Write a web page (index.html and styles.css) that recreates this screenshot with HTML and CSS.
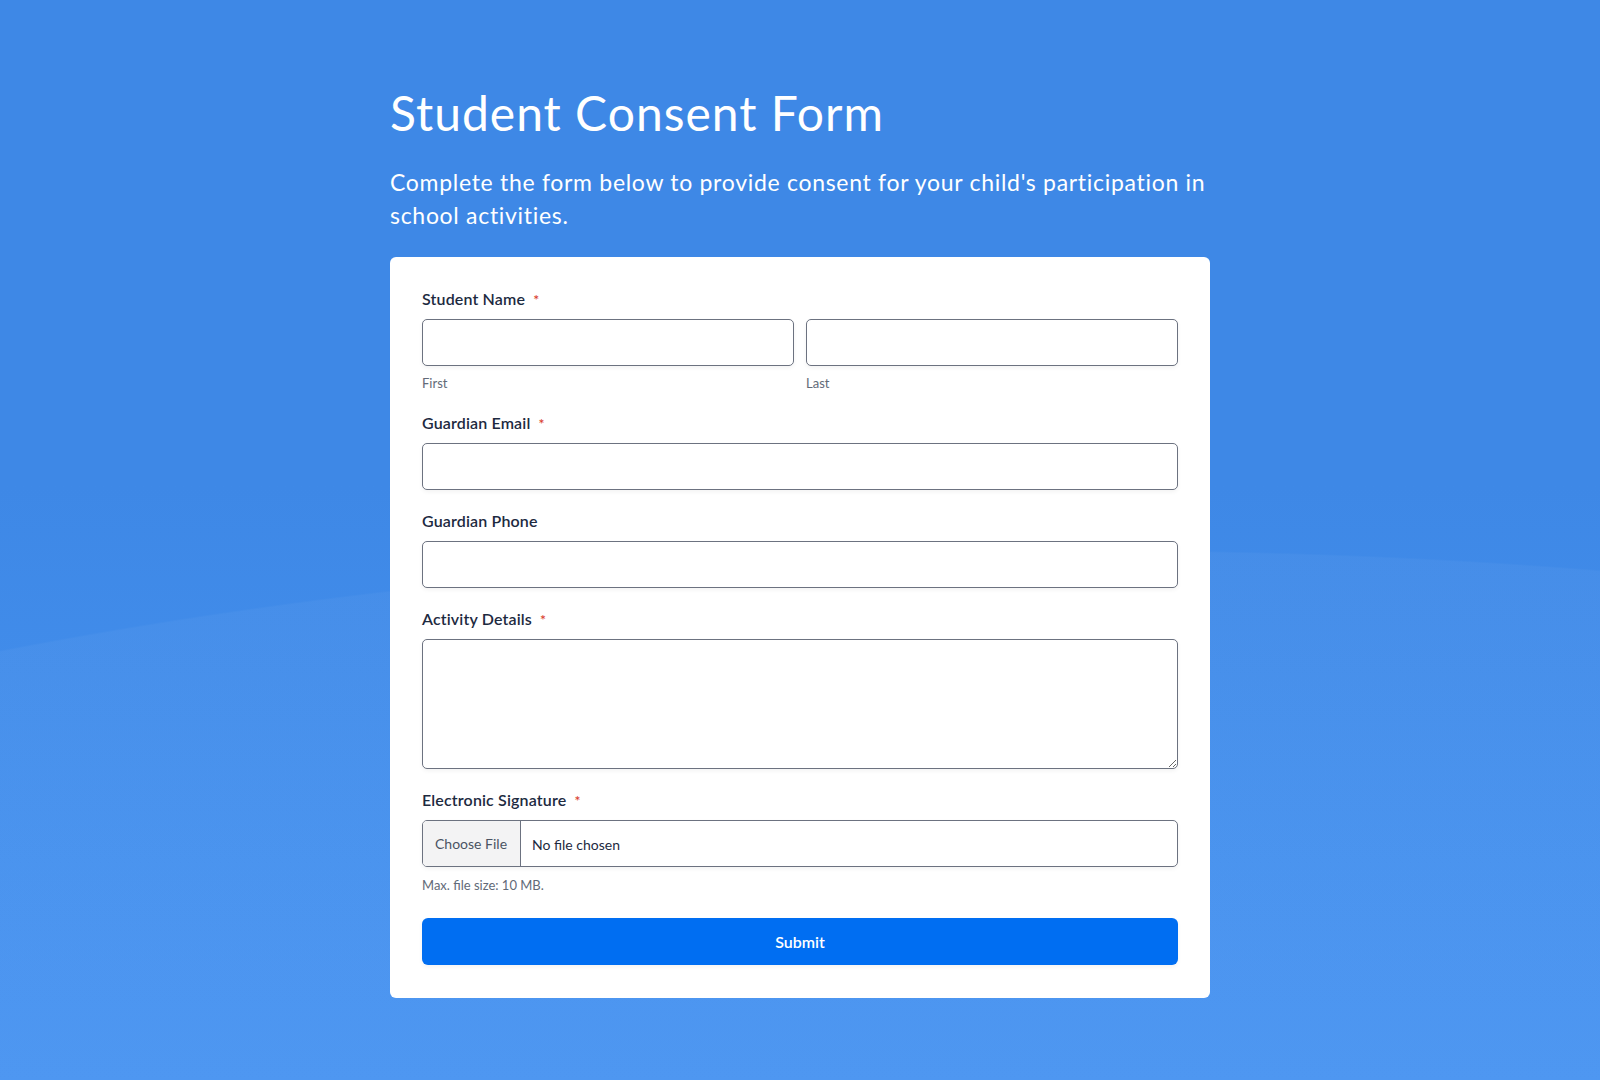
FILE: index.html
```html
<!DOCTYPE html>
<html lang="en">
<head>
<meta charset="utf-8">
<title>Student Consent Form</title>
<link rel="stylesheet" href="styles.css">
</head>
<body>
<main class="page">
  <h1 class="title">Student Consent Form</h1>
  <p class="intro">Complete the form below to provide consent for your child's participation in school activities.</p>
  <form class="card">
    <div class="field">
      <div class="label">Student Name <span class="req">*</span></div>
      <div class="name-row">
        <div class="name-col">
          <input class="input" type="text">
          <div class="sub">First</div>
        </div>
        <div class="name-col">
          <input class="input" type="text">
          <div class="sub">Last</div>
        </div>
      </div>
    </div>
    <div class="field">
      <div class="label">Guardian Email <span class="req">*</span></div>
      <input class="input" type="email">
    </div>
    <div class="field">
      <div class="label">Guardian Phone</div>
      <input class="input" type="tel">
    </div>
    <div class="field">
      <div class="label">Activity Details <span class="req">*</span></div>
      <textarea class="input textarea"></textarea>
    </div>
    <div class="field field-last">
      <div class="label">Electronic Signature <span class="req">*</span></div>
      <div class="file">
        <span class="file-btn">Choose File</span>
        <span class="file-name">No file chosen</span>
      </div>
      <div class="sub sub-file">Max. file size: 10 MB.</div>
    </div>
    <button class="submit" type="button">Submit</button>
  </form>
</main>
</body>
</html>
```

FILE: styles.css
```css
* { box-sizing: border-box; }

html, body {
  margin: 0;
  height: 1080px;
}

body {
  overflow: hidden;
  font-family: Lato, "Noto Sans", sans-serif;
  background:
    radial-gradient(ellipse 2400px 900px at 1100px 1450px, rgba(255, 255, 255, 0.035) 99.8%, rgba(255, 255, 255, 0) 100%),
    linear-gradient(180deg, #3e88e6 0%, #3e88e6 45%, #4490ee 80%, #4893f1 100%);
}

.page {
  width: 820px;
  margin: 0 auto;
  padding-top: 84px;
}

.title {
  margin: 0 0 24px;
  font-size: 48px;
  line-height: 1.2;
  font-weight: 400;
  letter-spacing: 1px;
  color: #ffffff;
}

.intro {
  margin: 0 0 25px;
  font-size: 23px;
  line-height: 33px;
  font-weight: 400;
  letter-spacing: 0.7px;
  color: #ffffff;
}

.card {
  background: #ffffff;
  border-radius: 6px;
  padding: 33px 32px 33px;
}

.field {
  margin-bottom: 22px;
}

.field-last {
  margin-bottom: 24px;
}

.label {
  font-size: 16px;
  line-height: 18px;
  font-weight: 600;
  letter-spacing: 0.15px;
  color: #1d2a3f;
  margin-bottom: 11px;
}

.req {
  color: #d9412f;
  font-size: 14px;
  line-height: 0;
  margin-left: 4px;
}

.name-row {
  display: grid;
  grid-template-columns: 1fr 1fr;
  gap: 12px;
}

.input {
  display: block;
  width: 100%;
  height: 47px;
  border: 1px solid #6c7280;
  border-radius: 5px;
  background: #ffffff;
  box-shadow: 0 2px 4px rgba(0, 0, 0, 0.05);
  font-family: Lato, "Noto Sans", sans-serif;
  font-size: 15px;
  padding: 0 12px;
  margin: 0;
}

.textarea {
  height: 130px;
  resize: vertical;
  padding: 10px 12px;
}

.sub {
  margin-top: 8px;
  font-size: 13px;
  line-height: 18px;
  color: #626a78;
}

.sub-file {
  margin-top: 9px;
}

.file {
  display: flex;
  align-items: stretch;
  height: 47px;
  border: 1px solid #6c7280;
  border-radius: 5px;
  overflow: hidden;
  box-shadow: 0 2px 4px rgba(0, 0, 0, 0.05);
}

.file-btn {
  display: flex;
  align-items: center;
  width: 98px;
  padding-left: 12px;
  background: #f3f3f4;
  border-right: 1px solid #6c7280;
  font-size: 14px;
  color: #4a5363;
}

.file-name {
  display: flex;
  align-items: center;
  padding-left: 11px;
  padding-top: 2px;
  font-size: 14px;
  color: #1d2a3f;
}

.submit {
  display: block;
  width: 100%;
  height: 47px;
  border: 0;
  border-radius: 6px;
  background: #006ef2;
  color: #ffffff;
  font-family: Lato, "Noto Sans", sans-serif;
  font-size: 16px;
  font-weight: 600;
  box-shadow: 0 2px 4px rgba(0, 0, 0, 0.05);
}
```
